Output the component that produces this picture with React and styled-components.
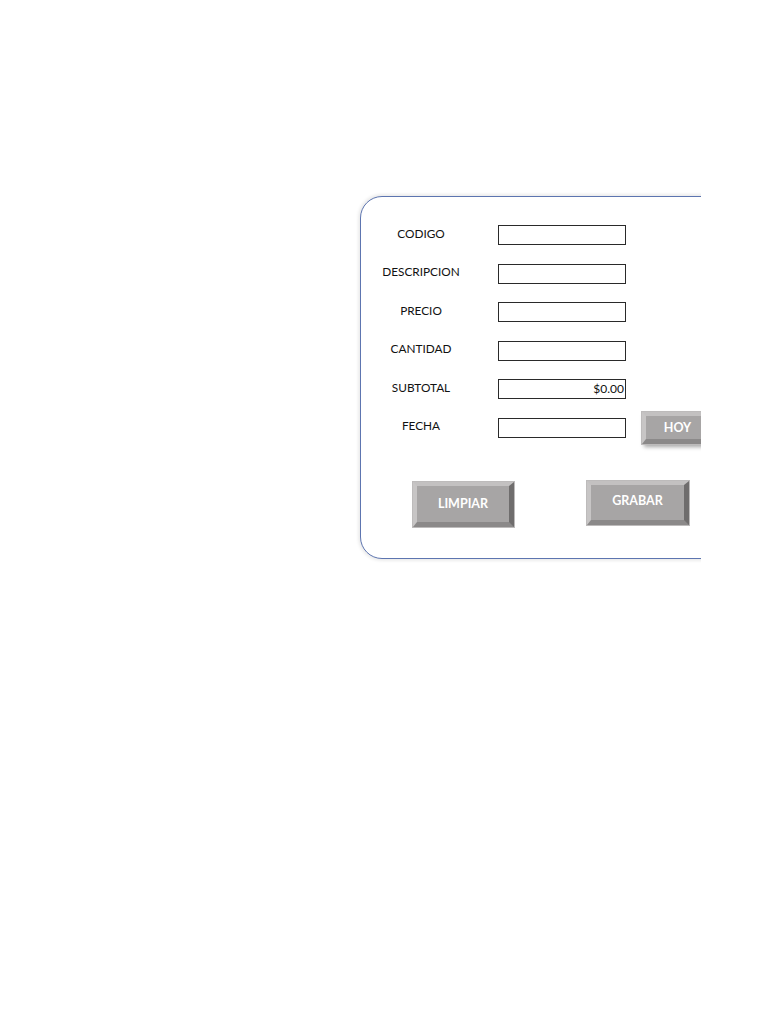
import React from "react";
import styled, { createGlobalStyle } from "styled-components";

const GlobalStyle = createGlobalStyle`
  html, body {
    margin: 0;
    padding: 0;
    background: #ffffff;
  }
  body {
    font-family: Lato, "Liberation Sans", sans-serif;
  }
`;

const fields = [
  { label: "CODIGO", value: "" },
  { label: "DESCRIPCION", value: "" },
  { label: "PRECIO", value: "" },
  { label: "CANTIDAD", value: "" },
  { label: "SUBTOTAL", value: "$0.00" },
  { label: "FECHA", value: "", today: true },
];

const App = () => {
  return (
    <>
      <GlobalStyle />
      <Page>
        <Clip>
          <Panel>
            <Form>
              {fields.map((f) => (
                <React.Fragment key={f.label}>
                  <Label>{f.label}</Label>
                  <Field>{f.value}</Field>
                  {f.today ? (
                    <BevelButton $w={72} $h={32} $shadow>
                      HOY
                    </BevelButton>
                  ) : (
                    <span />
                  )}
                </React.Fragment>
              ))}
            </Form>
            <Actions>
              <BevelButton $w={101} $h={45}>
                LIMPIAR
              </BevelButton>
              <BevelButton $w={102} $h={44} $up>
                GRABAR
              </BevelButton>
            </Actions>
          </Panel>
        </Clip>
      </Page>
    </>
  );
};

const Page = styled.div`
  width: 768px;
  height: 1024px;
  padding: 192px 0 0 356px;
  box-sizing: border-box;
`;

const Clip = styled.div`
  width: 341px;
  overflow: hidden;
  padding: 4px 0 6px 4px;
`;

const Panel = styled.div`
  width: 400px;
  box-sizing: border-box;
  border: 1.6px solid #5d75b0;
  border-radius: 22px;
  box-shadow: 0 0 3px 2px rgba(0, 0, 0, 0.08);
  background: #ffffff;
  padding: 28px 0 31px 7px;
`;

const Form = styled.div`
  display: grid;
  grid-template-columns: 106px 128px auto;
  column-gap: 24px;
  row-gap: 18.6px;
  grid-auto-rows: 20px;
  align-items: center;

  & > :nth-child(3n) {
    margin-left: -8px;
  }
`;

const Label = styled.div`
  font-size: 11.8px;
  color: #111111;
  text-align: center;
  margin-top: -4px;
`;

const Field = styled.div`
  height: 20px;
  box-sizing: border-box;
  border: 1.3px solid #2a2a2a;
  font-size: 12px;
  color: #111111;
  text-align: right;
  line-height: 18px;
  padding-right: 1px;
`;

const Actions = styled.div`
  display: flex;
  align-items: flex-start;
  gap: 73px;
  padding-left: 45px;
  margin-top: 44px;

  & > :last-child {
    margin-top: -1px;
  }
`;

const BevelButton = styled.div`
  width: ${(p) => p.$w}px;
  height: ${(p) => p.$h}px;
  box-sizing: border-box;
  display: flex;
  align-items: center;
  justify-content: center;
  background: #a7a5a5;
  border-style: solid;
  border-width: 4px 5px 5px 4px;
  border-color: #c3c1c1 #6f6d6d #8b8989 #c7c5c5;
  outline: 1px solid #bdbbbb;
  color: #ffffff;
  font-weight: 700;
  font-size: 12.5px;
  padding-bottom: ${(p) => (p.$up ? "4px" : "0")};
  box-shadow: ${(p) => (p.$shadow ? "2px 3px 4px rgba(0,0,0,0.35)" : "none")};
`;

export default App;
